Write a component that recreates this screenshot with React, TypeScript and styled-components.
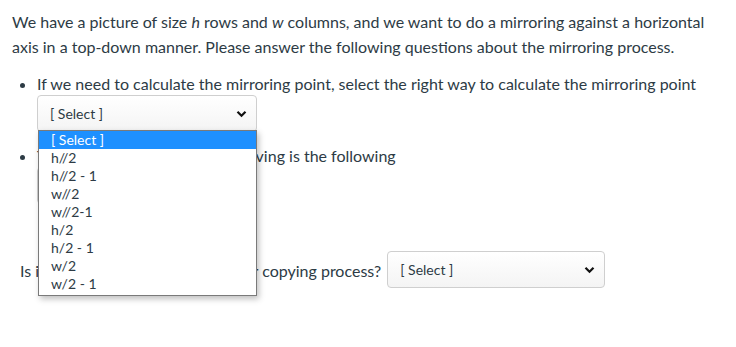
import React from "react";
import styled, { createGlobalStyle } from "styled-components";

const Global = createGlobalStyle`
  html, body { margin: 0; padding: 0; background: #fff; min-height: 100%; }
  html { height: 100%; }
  body { font-family: Lato, "Open Sans", sans-serif; color: #2d3b45; }
`;

const Page = styled.div`
  padding: 9px 12px 0 12px;
  min-height: 340px;
  font-size: 16px;
  line-height: 25px;
`;

const Para = styled.p<{ $indent?: number; $top?: number }>`
  margin: ${(p) => p.$top ?? 0}px 0 0 0;
  padding-left: ${(p) => p.$indent ?? 0}px;
  display: flex;
  align-items: center;
`;

const List = styled.ul`
  margin: 12px 0 0 0;
  padding-left: 25px;
`;

const Item = styled.li`
  margin-bottom: 11px;
`;

const SelectWrap = styled.div<{ $width: number }>`
  position: relative;
  width: ${(p) => p.$width}px;
  margin-top: -1px;
`;

const SelectBox = styled.div<{ $width: number }>`
  box-sizing: border-box;
  width: ${(p) => p.$width}px;
  height: 37px;
  border: 1px solid #cfcfcf;
  border-radius: 4px;
  background: linear-gradient(#ffffff, #f4f4f4);
  display: flex;
  align-items: center;
  justify-content: space-between;
  padding: 0 9px 0 12px;
  font-size: 14px;
  color: #2d3b45;
`;

const Chevron = () => (
  <svg width="11" height="8" viewBox="0 0 11 8">
    <path d="M1.5 1.8 L5.5 5.8 L9.5 1.8" fill="none" stroke="#111" strokeWidth="2.2" />
  </svg>
);

const Menu = styled.div`
  position: absolute;
  left: 1px;
  top: 35px;
  width: 219px;
  box-sizing: border-box;
  background: #fff;
  border: 1px solid #7a7a7a;
  box-shadow: 2px 3px 6px rgba(0, 0, 0, 0.25);
  padding: 0 0 2px 0;
  z-index: 5;
`;

const Option = styled.div<{ $active?: boolean }>`
  height: 18px;
  line-height: 18px;
  padding-left: 12px;
  font-size: 14px;
  color: ${(p) => (p.$active ? "#fff" : "#2d3b45")};
  background: ${(p) => (p.$active ? "#1e90ff" : "transparent")};
`;

const InlineSelect = styled.span`
  display: inline-flex;
  margin-left: 6px;
`;

const options = ["[ Select ]", "h//2", "h//2 - 1", "w//2", "w//2-1", "h/2", "h/2 - 1", "w/2", "w/2 - 1"];

const Select = ({ width, open }: { width: number; open?: boolean }) => (
  <SelectWrap $width={width}>
    <SelectBox $width={width}>
      <span>[ Select ]</span>
      <Chevron />
    </SelectBox>
    {open && (
      <Menu>
        {options.map((o, i) => (
          <Option key={o} $active={i === 0}>
            {o}
          </Option>
        ))}
      </Menu>
    )}
  </SelectWrap>
);

export default function App() {
  return (
    <>
      <Global />
      <Page>
        <Para>
          <span>
            We have a picture of size <i>h</i> rows and <i>w</i> columns, and we want to do a mirroring against a horizontal
            axis in a top-down manner. Please answer the following questions about the mirroring process.
          </span>
        </Para>
        <List>
          <Item>
            If we need to calculate the mirroring point, select the right way to calculate the mirroring point
            <Select width={220} open />
          </Item>
          <Item>
            The proper loop for the line moving is the following
            <Select width={220} />
          </Item>
        </List>
        <Para $indent={8} $top={48}>
          <span>Is it necessary to have an array for copying process?</span>
          <InlineSelect>
            <Select width={218} />
          </InlineSelect>
        </Para>
      </Page>
    </>
  );
}
